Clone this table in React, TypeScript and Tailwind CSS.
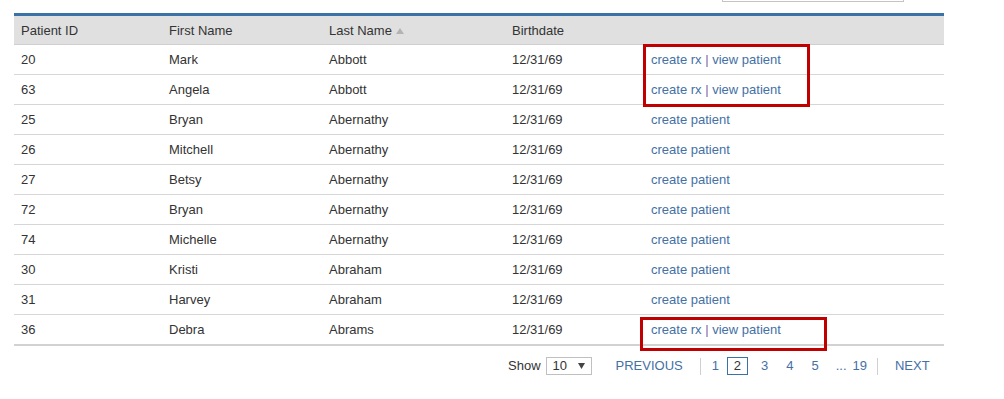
import React from "react";

const rows: [string, string, string, boolean][] = [
  ["20", "Mark", "Abbott", true],
  ["63", "Angela", "Abbott", true],
  ["25", "Bryan", "Abernathy", false],
  ["26", "Mitchell", "Abernathy", false],
  ["27", "Betsy", "Abernathy", false],
  ["72", "Bryan", "Abernathy", false],
  ["74", "Michelle", "Abernathy", false],
  ["30", "Kristi", "Abraham", false],
  ["31", "Harvey", "Abraham", false],
  ["36", "Debra", "Abrams", true],
];

export default function App() {
  return (
    <div
      className="relative w-[1004px] h-[399px] bg-white text-[13px] text-[#333]"
      style={{ fontFamily: '"Liberation Sans", Arial, sans-serif' }}
    >
      <div className="ml-[722px] w-[182px] h-[2px] border-x border-b border-[#c4c4c4]" />
      <div className="ml-[14px] mt-[11px] w-[930px]">
        <div className="h-[3px] bg-[#3a72a7]" />
        <div className="flex h-[29px] items-center pt-[1px] bg-[#e0e0e0] border-b border-[#cfcfcf]">
          <div className="w-[148px] pl-[7px]">Patient ID</div>
          <div className="w-[160px] pl-[7px]">First Name</div>
          <div className="w-[183px] pl-[7px] flex items-center">
            Last Name
            <svg width="8" height="6" viewBox="0 0 8 6" className="ml-[4px] mt-[1px]">
              <polygon points="4,0 8,6 0,6" fill="#b3b3b3" />
            </svg>
          </div>
          <div className="w-[139px] pl-[7px]">Birthdate</div>
          <div className="flex-1" />
        </div>
        {rows.map(([id, first, last, rx], i) => (
          <div
            key={id}
            className={`flex items-center ${
              i === rows.length - 1
                ? "h-[31px] border-b-2 border-[#d2d2d2]"
                : "h-[30px] border-b border-[#d6d6d6]"
            }`}
          >
            <div className="w-[148px] pl-[7px]">{id}</div>
            <div className="w-[160px] pl-[7px]">{first}</div>
            <div className="w-[183px] pl-[7px]">{last}</div>
            <div className="w-[139px] pl-[7px]">12/31/69</div>
            <div className="flex-1 pl-[7px] text-[#4470a6]">
              {rx ? (
                <span>
                  create rx <span className="text-[#7a6aa8]">|</span> view patient
                </span>
              ) : (
                <span>create patient</span>
              )}
            </div>
          </div>
        ))}
      </div>
      <div className="flex items-center mt-[11px] h-[18px] pl-[508px]">
        <span>Show</span>
        <div className="ml-[5px] w-[46px] h-[18px] border border-[#c0c0c0] flex items-center pl-[6px] pr-[6px] justify-between">
          <span>10</span>
          <svg width="7" height="6" viewBox="0 0 7 6">
            <polygon points="0,0 7,0 3.5,6" fill="#444" />
          </svg>
        </div>
        <span className="ml-[24px] text-[#4470a6]">PREVIOUS</span>
        <div className="ml-[17px] w-px h-[17px] bg-[#cfcfcf]" />
        <span className="ml-[11px] text-[#4470a6]">1</span>
        <div className="ml-[8px] w-[21px] h-[18px] border border-[#3a72a7] flex items-center justify-center text-[#333]">
          2
        </div>
        <span className="ml-[13px] text-[#4470a6]">3</span>
        <span className="ml-[18px] text-[#4470a6]">4</span>
        <span className="ml-[18px] text-[#4470a6]">5</span>
        <span className="ml-[17px] text-[#4470a6]">...</span>
        <span className="ml-[6px] text-[#4470a6]">19</span>
        <div className="ml-[10px] w-px h-[17px] bg-[#cfcfcf]" />
        <span className="ml-[17px] text-[#4470a6]">NEXT</span>
      </div>
      <div className="absolute left-[643px] top-[44px] w-[167px] h-[63px] border-[3px] border-[#c00000]" />
      <div className="absolute left-[640px] top-[317px] w-[187px] h-[34px] border-[3px] border-[#c00000]" />
    </div>
  );
}
